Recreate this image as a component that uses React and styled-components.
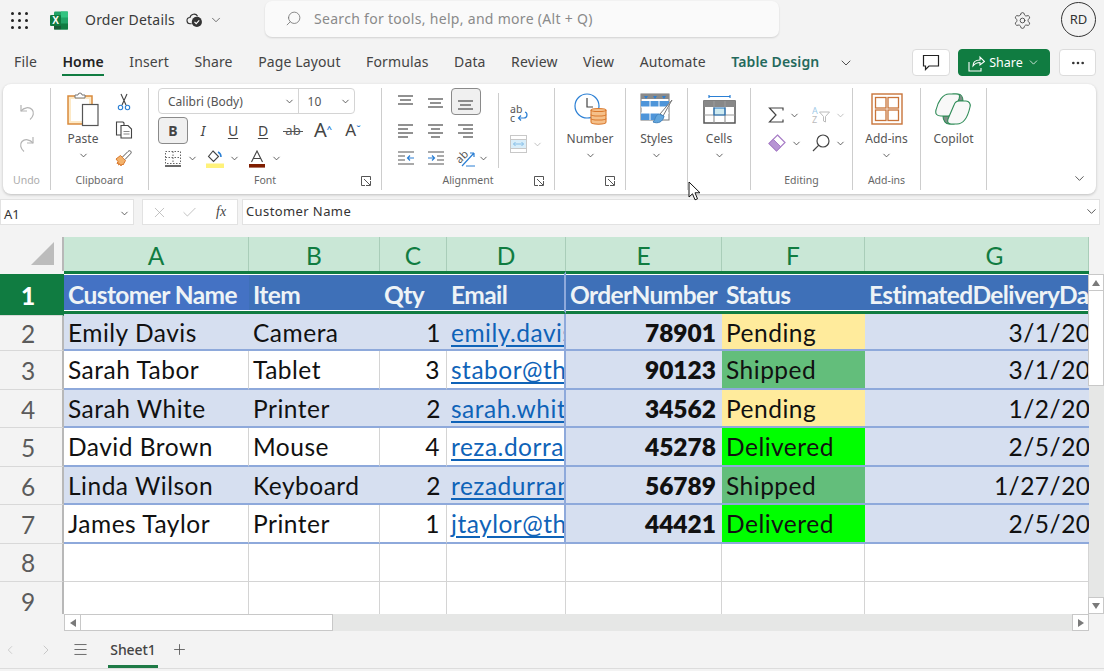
import React from "react";
import styled, { createGlobalStyle } from "styled-components";
import { ChevronDown, ChevronLeft, ChevronRight, Menu, Plus, Search, Settings, X, Check, MoreHorizontal } from "lucide-react";

const UI = `"Noto Sans", "Open Sans", sans-serif`;
const CELL = `Lato, "Liberation Sans", sans-serif`;

const GlobalStyle = createGlobalStyle`
  html, body { margin: 0; padding: 0; background: #f3f3f3; }
  * { box-sizing: border-box; }
`;

const Page = styled.div`
  position: relative;
  width: 1104px;
  height: 671px;
  overflow: hidden;
  background: #f3f3f3;
  font-family: ${UI};
  color: #333;
  display: flex;
  flex-direction: column;
`;

/* title bar */
const TitleBar = styled.div`
  height: 40px;
  display: flex;
  align-items: center;
  flex: none;
`;
const TitleLeft = styled.div`
  width: 265px;
  display: flex;
  align-items: center;
  padding-left: 11px;
`;
const Waffle = styled.div`
  display: grid;
  grid-template-columns: repeat(3, 3px);
  grid-auto-rows: 3px;
  gap: 4px;
  margin-right: 22px;
  i { background: #222; border-radius: 50%; }
`;
const DocName = styled.span`
  font-size: 14px;
  margin: 0 11px 0 17px;
  color: #3a3a3a;
  letter-spacing: 0.2px;
  margin-top: -2px;
`;
const SearchBox = styled.div`
  width: 514px;
  height: 36px;
  margin-top: -3px;
  background: #fafafa;
  border-radius: 7px;
  box-shadow: 0 1px 2px rgba(0, 0, 0, 0.14);
  display: flex;
  align-items: center;
  gap: 12px;
  padding-left: 20px;
  font-size: 14px;
  letter-spacing: 0.3px;
  color: #8a8a8a;
`;
const TitleRight = styled.div`
  flex: 1;
  display: flex;
  align-items: center;
  justify-content: flex-end;
  padding-right: 8px;
  gap: 29px;
`;
const Avatar = styled.div`
  width: 35px;
  height: 35px;
  border: 1px solid #333;
  border-radius: 50%;
  display: flex;
  align-items: center;
  justify-content: center;
  font-size: 13px;
  color: #333;
  margin-top: -2px;
`;

/* tabs */
const TabBar = styled.div`
  height: 44px;
  flex: none;
  display: flex;
  align-items: flex-start;
  padding: 12px 8px 0 14px;
`;
const Tabs = styled.div`
  display: flex;
  gap: 25.5px;
  flex: 1;
`;
const Tab = styled.div`
  position: relative;
  font-size: 14px;
  line-height: 20px;
  letter-spacing: 0.13px;
  color: ${(p) => (p.$accent ? "#24695c" : p.$active ? "#222" : "#444")};
  font-weight: ${(p) => (p.$active || p.$accent ? 600 : 400)};
  &::after {
    content: "";
    display: ${(p) => (p.$active ? "block" : "none")};
    position: absolute;
    left: 0;
    right: 0;
    bottom: -4px;
    height: 2px;
    background: #107c41;
  }
`;
const TabActions = styled.div`
  display: flex;
  gap: 8px;
  margin-top: -3px;
`;
const ActionBtn = styled.div`
  height: 27px;
  width: ${(p) => p.$w}px;
  margin-left: ${(p) => p.$ml || 0}px;
  border-radius: 4px;
  border: 1px solid ${(p) => (p.$green ? "#107c41" : "#dcdcdc")};
  background: ${(p) => (p.$green ? "#107c41" : "#fff")};
  color: ${(p) => (p.$green ? "#fff" : "#333")};
  display: flex;
  align-items: center;
  justify-content: center;
  gap: 4px;
  font-size: 12.5px;
`;

/* ribbon */
const Ribbon = styled.div`
  flex: none;
  width: 1093px;
  height: 110px;
  margin-left: 3px;
  background: #fff;
  border-radius: 8px;
  box-shadow: 0 1px 3px rgba(0, 0, 0, 0.22);
  display: flex;
  align-items: flex-start;
`;
const Group = styled.div`
  position: relative;
  width: ${(p) => p.$w}px;
  height: 102px;
  margin-top: 4px;
  border-right: 1px solid #cdcdcd;
  display: flex;
  flex-direction: column;
  flex: none;
`;
const Body = styled.div`
  height: 84px;
  display: flex;
  justify-content: ${(p) => p.$justify || "flex-start"};
  padding-left: ${(p) => p.$pl || 0}px;
`;
const GroupLabel = styled.div`
  text-align: center;
  font-size: 10.5px;
  line-height: 16px;
  color: ${(p) => (p.$off ? "#ababab" : "#666")};
`;
const Launcher = styled.div`
  position: absolute;
  right: 10px;
  bottom: 4px;
  line-height: 0;
`;
const Collapse = styled.div`
  flex: 1;
  height: 100%;
  display: flex;
  align-items: flex-end;
  justify-content: flex-end;
  padding: 0 9px 8px 0;
  color: #444;
  line-height: 0;
`;
const Tall = styled.div`
  display: flex;
  flex-direction: column;
  align-items: center;
  width: ${(p) => p.$w || 60}px;
  font-size: 12px;
  color: #555;
  line-height: 18px;
  svg.lucide { margin-top: 2px; }
`;
const TallIcon = styled.div`
  height: 42px;
  display: flex;
  align-items: center;
  justify-content: center;
`;
const Chev = styled(ChevronDown).attrs((p) => ({ size: p.size || 11, strokeWidth: 1.8 }))`
  color: ${(p) => (p.$off ? "#b5b5b5" : "#444")};
  flex: none;
`;
const StackCol = styled.div`
  display: flex;
  flex-direction: column;
  align-items: center;
  gap: ${(p) => p.$gap || 0}px;
  padding-top: ${(p) => p.$top || 0}px;
  margin-left: ${(p) => p.$ml || 0}px;
`;
const FontBox = styled.div`
  display: flex;
  width: 197px;
  height: 26px;
  border: 1px solid #d4d4d4;
  border-radius: 4px;
  font-size: 12px;
  color: #555;
`;
const FontField = styled.div`
  width: ${(p) => p.$w}px;
  display: flex;
  align-items: center;
  justify-content: space-between;
  padding: 0 3px 0 9px;
  & + & { border-left: 1px solid #d4d4d4; }
`;
const FontCol = styled.div`
  display: flex;
  flex-direction: column;
`;
const FontRow = styled.div`
  display: flex;
  align-items: center;
  height: ${(p) => p.$h}px;
  margin-top: ${(p) => p.$mt || 0}px;
  padding-left: ${(p) => p.$pl || 0}px;
  gap: ${(p) => p.$gap || 0}px;
`;
const FormatBtn = styled.div`
  width: 30px;
  height: 27px;
  display: flex;
  align-items: center;
  justify-content: center;
  border-radius: 4px;
  font-family: ${UI};
  font-size: 14px;
  color: #444;
  background: ${(p) => (p.$on ? "#f0f0f0" : "transparent")};
  border: 1px solid ${(p) => (p.$on ? "#8a8a8a" : "transparent")};
  font-weight: ${(p) => (p.$on ? 700 : 400)};
  font-style: ${(p) => (p.$i ? "italic" : "normal")};
  text-decoration: ${(p) => p.$deco || "none"};
  text-underline-offset: 2px;
`;
const FormatLetter = styled(FormatBtn)`
  font-size: ${(p) => p.$size || 13}px;
  padding-bottom: 2px;
`;
const Caret = styled.span`
  font-size: 9px;
  align-self: flex-start;
  margin-top: 4px;
  color: ${(p) => p.$c};
  font-weight: 700;
`;
const Drop = styled.div`
  display: flex;
  align-items: center;
  gap: ${(p) => p.$gap ?? 5}px;
`;
const OrientDrop = styled(Drop)`
  padding-left: 5px;
`;
const AlignGrid = styled.div`
  width: 107px;
  display: grid;
  grid-template-columns: 30px 30px 47px;
  grid-template-rows: 27px 29px 28px;
`;
const AlignCell = styled.div`
  width: 30px;
  display: flex;
  align-items: center;
  justify-content: center;
  border-radius: 4px;
  background: ${(p) => (p.$on ? "#f0f0f0" : "transparent")};
  border: 1px solid ${(p) => (p.$on ? "#8a8a8a" : "transparent")};
`;
const AlignSplit = styled.div`
  margin-top: 5px;
  height: 75px;
  border-left: 1px solid #cdcdcd;
  padding: 12px 0 0 11px;
  display: flex;
  flex-direction: column;
  gap: 12px;
`;
const EditGrid = styled.div`
  display: grid;
  grid-template-columns: auto auto;
  grid-auto-rows: 28px;
  column-gap: 10px;
  align-items: center;
  padding-top: 13px;
`;

/* formula bar */
const FormulaBar = styled.div`
  flex: none;
  height: 26px;
  margin-top: 5px;
  padding-right: 4px;
  display: flex;
  gap: 4px;
`;
const Field = styled.div`
  height: 26px;
  background: #fff;
  border: 1px solid #e2e2e2;
  display: flex;
  align-items: center;
  font-size: 13px;
  width: ${(p) => (p.$w ? `${p.$w}px` : "auto")};
  flex: ${(p) => (p.$w ? "none" : 1)};
  margin-left: ${(p) => p.$ml || 0}px;
  padding: ${(p) => p.$pt || 0}px ${(p) => p.$pr ?? 3}px ${(p) => p.$pb || 0}px 3px;
  justify-content: ${(p) => p.$justify || "flex-start"};
  color: #333;
  letter-spacing: ${(p) => p.$ls || 0};
`;
const FxGroup = styled(Field)`
  gap: 13px;
  padding: 0 9px 0 8px;
  color: #aaa;
`;
const Fx = styled.span`
  font-family: "Liberation Serif", serif;
  font-style: italic;
  font-size: 14px;
  color: #444;
  margin-left: 5px;
`;

/* sheet */
const SheetWrap = styled.div`
  flex: none;
  margin-top: 12px;
  display: flex;
  height: 377px;
`;
const Grid = styled.div`
  width: 1089px;
  display: grid;
  grid-template-columns: 64px 185px 131px 67px 119px 156px 143px 224px;
  grid-template-rows: 34px 43px 37px repeat(5, 38.5px) 38.5px 32.5px;
  overflow: hidden;
  font-family: ${CELL};
  font-size: 24.5px;
`;
const Corner = styled.div`
  background: #f3f3f3;
  border-right: 2px solid #b8b8b8;
  display: flex;
  align-items: flex-end;
  justify-content: flex-end;
  padding: 0 8px 6px 0;
  line-height: 0;
`;
const ColHead = styled.div`
  background: #c9e7d6;
  border-right: 1px solid #a9cdb9;
  color: #107c41;
  display: flex;
  align-items: center;
  justify-content: center;
  padding-top: 3px;
  padding-left: ${(p) => p.$shift || 0}px;
`;
const RowHead = styled.div`
  background: ${(p) => (p.$on ? "#107c41" : "#f3f3f3")};
  color: ${(p) => (p.$on ? "#fff" : "#5b5b5b")};
  font-weight: ${(p) => (p.$on ? 900 : 400)};
  border-right: 2px solid ${(p) => (p.$on ? "#107c41" : "#b8b8b8")};
  border-bottom: 1px solid #d8d8d8;
  display: flex;
  align-items: center;
  justify-content: center;
  padding: ${(p) => p.$top ?? 2}px 6px 0 0;
  margin: ${(p) => (p.$on ? "3px 0 -2px" : 0)};
  position: ${(p) => (p.$on ? "relative" : "static")};
`;
const HeadCell = styled.div`
  background: ${(p) => (p.$first ? "#4472c4" : "#3e70b8")};
  color: #eef3f6;
  font-weight: 700;
  letter-spacing: -0.58px;
  border-top: 3px solid #107c41;
  border-bottom: 3px solid #107c41;
  box-shadow: inset 0 1px 0 #fff, inset 0 -1px 0 #fff;
  display: flex;
  align-items: center;
  padding: 3px 0 0 4px;
  white-space: nowrap;
  overflow: hidden;
  border-right: ${(p) => (p.$split ? "2px solid #8ea9db" : "none")};
`;
const Cell = styled.div`
  background: ${(p) => p.$bg || "#fff"};
  color: #111;
  border-bottom: 2px solid #8ea9db;
  border-right: ${(p) =>
    p.$split ? "2px solid #8ea9db" : p.$rule ? "1px solid #d4d4d4" : "none"};
  display: flex;
  align-items: center;
  justify-content: ${(p) => (p.$right ? "flex-end" : "flex-start")};
  padding: 1px ${(p) => (p.$right ? 6 : 4)}px 0 4px;
  font-weight: ${(p) => (p.$bold ? 800 : 400)};
  letter-spacing: ${(p) => (p.$bold ? 0 : "0.5px")};
  white-space: nowrap;
  overflow: hidden;
`;
const Clipped = styled.span`
  margin-right: -37px;
`;
const Mail = styled.span`
  color: #0f63b8;
  text-decoration: underline;
  text-underline-offset: 3px;
`;
const Blank = styled.div`
  background: #fff;
  border-right: 1px solid #d4d4d4;
  border-bottom: 1px solid #d4d4d4;
`;

const VScroll = styled.div`
  width: 15px;
  display: flex;
  flex-direction: column;
  background: #e6e7e6;
`;
const VGap = styled.div`
  height: 37px;
  background: #f3f3f3;
`;
const ScrollBtn = styled.div`
  height: ${(p) => p.$h || 17}px;
  width: ${(p) => p.$w || 16}px;
  margin-left: ${(p) => p.$ml || 0}px;
  background: #fff;
  border: 1px solid #c8c8c8;
  display: flex;
  align-items: center;
  justify-content: center;
  line-height: 0;
  flex: none;
`;
const VThumb = styled.div`
  height: 95px;
  margin-left: -1px;
  background: #fff;
  border: 1px solid #c8c8c8;
  border-top: none;
  flex: none;
`;
const Fill = styled.div`
  flex: 1;
`;
const HScroll = styled.div`
  flex: none;
  width: 1025px;
  height: 17px;
  margin-left: 64px;
  background: #e6e7e6;
  display: flex;
`;
const HThumb = styled.div`
  width: 252px;
  background: #fff;
  border: 1px solid #c8c8c8;
  border-left: none;
`;

/* sheet tabs */
const SheetTabs = styled.div`
  flex: none;
  height: 38px;
  border-bottom: 1px solid #dcdcdc;
  display: flex;
  align-items: center;
  padding-left: 3px;
  color: #444;
`;
const NavBtn = styled.div`
  width: ${(p) => p.$w}px;
  margin-left: ${(p) => p.$ml || 0}px;
  display: flex;
  justify-content: center;
  color: ${(p) => p.$c || "#555"};
  line-height: 0;
`;
const SheetTab = styled.div`
  position: relative;
  width: 50px;
  margin: 0 8px 0 15px;
  text-align: center;
  font-size: 14px;
  font-weight: 500;
  letter-spacing: -0.1px;
  line-height: 37px;
  color: #444;
  &::after {
    content: "";
    position: absolute;
    left: 0;
    right: 0;
    bottom: 0;
    height: 3px;
    background: #1e7a46;
  }
`;
const Cursor = styled.svg`
  position: absolute;
  left: 688px;
  top: 181px;
`;

/* icons */
const ExcelLogo = () => (
  <svg width="18" height="19" viewBox="0 0 18 19">
    <rect x="4" y="0.5" width="14" height="18" rx="1.2" fill="#21a366" />
    <rect x="11" y="0.5" width="7" height="6" fill="#33c481" />
    <rect x="11" y="12.5" width="7" height="6" fill="#107c41" />
    <rect x="4" y="12.5" width="7" height="6" fill="#185c37" />
    <rect x="0" y="4" width="11" height="11" rx="1" fill="#0f7b40" />
    <text x="5.5" y="13" textAnchor="middle" fontSize="10" fontWeight="700" fill="#fff" fontFamily="Liberation Sans">X</text>
  </svg>
);
const CloudCheck = () => (
  <svg width="17" height="16" viewBox="0 0 18 16" fill="none" stroke="#333" strokeWidth="1.2">
    <path d="M6 12H4.5a3.3 3.3 0 0 1-.3-6.6A4.4 4.4 0 0 1 12.3 4" />
    <circle cx="11.5" cy="10" r="5.4" fill="#333" stroke="none" />
    <path d="M9 10l1.8 1.8L14 8.5" stroke="#fff" />
  </svg>
);
const Comment = () => (
  <svg width="18" height="17" viewBox="0 0 18 17" fill="none" stroke="#222" strokeWidth="1.2">
    <path d="M1.5 1.5h15v10.5H7l-3.5 3.5V12h-2z" />
  </svg>
);
const ShareIcon = () => (
  <svg width="17" height="18" viewBox="0 0 17 18" fill="none" stroke="#fff" strokeWidth="1.1">
    <path d="M1 8v9h12v-3" />
    <path d="M5 12c0-4 3-6 7-6V3l4.5 4.5L12 11V8.500c-3 0-5 1-7 3.500z" />
  </svg>
);
const Undo = ({ flip }) => (
  <svg width="18" height="18" viewBox="0 0 18 18" fill="none" stroke="#b4b4b4" strokeWidth="1.2" style={flip ? { transform: "scaleX(-1)" } : undefined}>
    <path d="M3 2v6h6" />
    <path d="M3 8c3-3.500 8-4.500 11-1.500 2.500 2.500 1.500 7-2 10" />
  </svg>
);
const PasteIcon = () => (
  <svg width="32" height="36" viewBox="0 0 32 36">
    <rect x="1" y="5" width="24" height="28" fill="#fde9c6" stroke="#d98a3d" strokeWidth="1.5" />
    <rect x="4" y="8" width="18" height="22" fill="#fff" />
    <path d="M8 7V4h3a2 2 0 0 1 4 0h3v3z" fill="#fff" stroke="#777" strokeWidth="1" />
    <rect x="15.500" y="13.500" width="15.500" height="21" fill="#fff" stroke="#555" strokeWidth="1.2" />
  </svg>
);
const Scissors = () => (
  <svg width="14" height="18" viewBox="0 0 14 18" fill="none" strokeWidth="1.1">
    <path d="M4 1l5 11M10 1L5 12" stroke="#444" />
    <circle cx="3.500" cy="14.500" r="2.200" stroke="#2a7fd4" />
    <circle cx="10.500" cy="14.500" r="2.200" stroke="#2a7fd4" />
  </svg>
);
const CopyIcon = () => (
  <svg width="18" height="18" viewBox="0 0 18 18" fill="none" stroke="#444" strokeWidth="1.1">
    <path d="M6 14H1.500V1H8l1 1v2" />
    <path d="M6 4.500h7l3.500 3.500v9H6z" fill="#fff" />
    <path d="M8.500 10.500h6M8.500 13h6" stroke="#888" />
  </svg>
);
const Painter = () => (
  <svg width="18" height="18" viewBox="0 0 18 18" fill="none">
    <path d="M1 10l4.500-3.500 5 5L8 16l-1-1-1 2-1-2-1.500 1 .5-2-2 .5 1-2z" fill="#f3b26b" stroke="#d9782d" />
    <path d="M7.500 8L13 2.500c1-1 2-1 2.700-.3s.7 1.700-.3 2.700L10 10.500" fill="#fff" stroke="#555" />
  </svg>
);
const BorderIcon = () => (
  <svg width="18" height="18" viewBox="0 0 18 18" fill="none" stroke="#666" strokeWidth="1">
    <path d="M1.500 1.500h15v12h-15z" strokeDasharray="1.500 1.500" />
    <path d="M9 1.500v12M1.500 7.500h15" strokeDasharray="1.500 1.500" />
    <path d="M1 16h16" strokeWidth="1.600" stroke="#444" />
  </svg>
);
const FillIcon = () => (
  <svg width="18" height="18" viewBox="0 0 18 18" fill="none">
    <path d="M7 1l5.500 5.500L7.500 11.500 2.500 6.500z" stroke="#444" strokeWidth="1.100" fill="#fff" />
    <path d="M12 2c2 1 3 3 3 5" stroke="#2a7fd4" strokeWidth="1.500" />
    <rect x="0" y="13.500" width="18" height="4.500" fill="#fff27a" />
  </svg>
);
const ColorA = () => (
  <svg width="18" height="18" viewBox="0 0 18 18" fill="none" stroke="#444" strokeWidth="1.100">
    <path d="M3.500 12L9 1l5.500 11M5.500 8.500h7" />
    <rect x="1" y="14" width="16" height="3.600" fill="#7f1d00" stroke="none" />
  </svg>
);
const StrikeAb = () => (
  <svg width="20" height="14" viewBox="0 0 20 14" fill="none" stroke="#555" strokeWidth="1">
    <path d="M0 7.500h20" />
    <text x="10" y="11" textAnchor="middle" fontSize="13" fill="#555" stroke="none" fontFamily="Noto Sans">ab</text>
  </svg>
);
const LauncherIcon = () => (
  <svg width="10" height="10" viewBox="0 0 10 10" fill="none" stroke="#555" strokeWidth="1">
    <path d="M9.500 4V.5H.5v9H4" />
    <path d="M3 3l6 6M9.500 5v4.500H5" />
  </svg>
);
const AlignLines = ({ lines }) => (
  <svg width="18" height="20" viewBox="0 0 18 20" fill="none" stroke="#555" strokeWidth="1.300">
    {lines.map(([a, b, y]) => (
      <path key={y} d={`M${a} ${y}H${b}`} />
    ))}
  </svg>
);
const IndentIcon = ({ flip }) => (
  <svg width="18" height="14" viewBox="0 0 18 14" fill="none" strokeWidth="1.200" style={flip ? { transform: "scaleX(-1)" } : undefined}>
    <path d="M1 1h16M1 13h16M10 5h7M10 9h7" stroke="#555" />
    <path d="M1 7h6M5 4.500L7.500 7 5 9.500" stroke="#2a7fd4" />
  </svg>
);
const OrientIcon = () => (
  <svg width="20" height="20" viewBox="0 0 20 20" fill="none">
    <text x="7" y="12" fontSize="11" fill="#555" transform="rotate(-45 7 10)" textAnchor="middle" fontFamily="Noto Sans">ab</text>
    <path d="M6 18L18 5M18 5h-4M18 5v4" stroke="#2a7fd4" strokeWidth="1.200" />
    <path d="M10 18h9" stroke="#2a7fd4" strokeWidth="1" />
  </svg>
);
const WrapIcon = () => (
  <svg width="18" height="18" viewBox="0 0 18 18" fill="none">
    <text x="0" y="8" fontSize="10.500" fill="#555" fontFamily="Noto Sans">ab</text>
    <text x="0" y="17" fontSize="10.500" fill="#555" fontFamily="Noto Sans">c</text>
    <path d="M15 7c3 1 2.500 6-1 6H8.500M11 10.500L8.500 13l2.500 2.500" stroke="#2a7fd4" strokeWidth="1.200" />
  </svg>
);
const MergeIcon = () => (
  <svg width="17" height="18" viewBox="0 0 17 18" fill="none" strokeWidth="1">
    <rect x="0.500" y="0.500" width="16" height="17" fill="#fff" stroke="#c8c8c8" />
    <rect x="0.500" y="4.500" width="16" height="9" fill="#d8edf9" stroke="#c8c8c8" />
    <path d="M3.500 9h10M5.500 7L3.500 9l2 2M11.500 7l2 2-2 2" stroke="#86bfe8" />
  </svg>
);
const NumberIcon = () => (
  <svg width="33" height="33" viewBox="0 0 33 33" fill="none">
    <circle cx="13" cy="13" r="12" stroke="#2a7fd4" strokeWidth="1.200" fill="#fff" />
    <path d="M13 5v9h6" stroke="#444" strokeWidth="1.200" />
    <path d="M17 17c0-2 15-2 15 0v12c0 3-15 3-15 0z" fill="#f5c08a" stroke="#d9782d" strokeWidth="1.100" />
    <path d="M17 17c0 2 15 2 15 0M17 21.500c0 2 15 2 15 0M17 25.500c0 2 15 2 15 0" stroke="#d9782d" strokeWidth="1.100" />
  </svg>
);
const StylesIcon = () => (
  <svg width="34" height="32" viewBox="0 0 34 32" fill="none">
    <rect x="1" y="1" width="28" height="26" fill="#fff" stroke="#777" />
    <rect x="1" y="1" width="28" height="5" fill="#8a8a8a" />
    <path d="M4 3h4l-2 3zM13 3h4l-2 3zM22 3h4l-2 3z" fill="#2a7fd4" />
    <rect x="1" y="8" width="28" height="6" fill="#4e95d9" />
    <rect x="1" y="20" width="18" height="7" fill="#4e95d9" />
    <path d="M1 14h28M1 20h28M10 6v21M19 6v21" stroke="#fff" />
    <path d="M32 7L20 21l3 2z" fill="#fff" stroke="#777" />
    <path d="M19 21c-4 1-3 5-6 8 5 2 10 0 11-6z" fill="#62a6dd" stroke="#4283bd" />
  </svg>
);
const CellsIcon = () => (
  <svg width="33" height="29" viewBox="0 0 33 29" fill="none" strokeWidth="1.200">
    <path d="M6 1.500h21M6 0v3M27 0v3" stroke="#2a7fd4" />
    <rect x="1" y="6" width="31" height="22" stroke="#555" strokeWidth="1.500" />
    <rect x="1" y="6" width="31" height="6" fill="#888" />
    <rect x="11" y="13" width="11" height="7" fill="#cfeaf0" />
    <path d="M1 20h31M11 6v22M22 6v22" stroke="#999" />
    <path d="M11 13h11v7H11z" stroke="#1e6fb8" />
  </svg>
);
const Sigma = () => (
  <svg width="16" height="16" viewBox="0 0 16 16" fill="none" stroke="#444" strokeWidth="1.200">
    <path d="M15 3.500V1H1.500l6.500 7-6.500 7H15v-2.500" />
  </svg>
);
const SortFilter = () => (
  <svg width="18" height="18" viewBox="0 0 18 18" fill="none" strokeWidth="1">
    <text x="0" y="8" fontSize="9" fill="#9fcbe8" fontFamily="Noto Sans">A</text>
    <text x="0" y="17" fontSize="9" fill="#bbb" fontFamily="Noto Sans">Z</text>
    <path d="M7.500 6h10l-4 4.500V16l-2-1v-4.500z" stroke="#bbb" />
  </svg>
);
const Eraser = () => (
  <svg width="18" height="18" viewBox="0 0 18 18" fill="none">
    <path d="M9.500 1L17 8.500 8.500 17 1 9.500z" fill="#fff" stroke="#a77cc6" strokeWidth="1.200" />
    <path d="M5.300 5.300L12.800 12.800 8.500 17 1 9.500z" fill="#b794d4" stroke="#a77cc6" />
  </svg>
);
const FindIcon = () => (
  <svg width="18" height="18" viewBox="0 0 18 18" fill="none" stroke="#444" strokeWidth="1.200">
    <circle cx="11" cy="7" r="6" />
    <path d="M6.800 11.200L1 17" />
  </svg>
);
const AddIns = () => (
  <svg width="32" height="32" viewBox="0 0 32 32" fill="none" stroke="#c8743a" strokeWidth="1.300">
    <rect x="1" y="1" width="30" height="30" strokeWidth="1.400" />
    <rect x="4.500" y="4.500" width="10.500" height="10.500" />
    <rect x="17" y="4.500" width="10.500" height="10.500" />
    <rect x="4.500" y="17" width="10.500" height="10.500" />
    <rect x="17" y="17" width="10.500" height="10.500" />
  </svg>
);
const Copilot = () => (
  <svg width="37" height="32" viewBox="0 0 37 32" fill="none" stroke="#2e8b57" strokeWidth="1.100">
    <path d="M18 1h5c3 0 5 3 5 7H17z" fill="#7f8f87" />
    <path d="M8 23h11v8h-5c-3 0-6-3-6-8z" fill="#7f8f87" />
    <path d="M14 1h7c4 0 4 2 3 5l-6 14c-1 2-2 3-5 3H6C2 23 0 21 1 17 3 8 8 1 14 1z" fill="#f8f8f8" />
    <path d="M22 31h-6c-3 0-4-2-3-5l6-14c1-3 3-4 5-4h7c3 0 5 3 4 6-2 9-6 17-13 17z" fill="#f8f8f8" />
  </svg>
);
const Tri = ({ dir }) => {
  const pts = {
    up: "1,8 5,2 9,8",
    down: "1,2 5,8 9,2",
    left: "8,1 2,5 8,9",
    right: "2,1 8,5 2,9",
  }[dir];
  return (
    <svg width="10" height="10" viewBox="0 0 10 10">
      <polygon points={pts} fill="#7a7a7a" />
    </svg>
  );
};

const columns = ["A", "B", "C", "D", "E", "F", "G"];
const headers = ["Customer Name", "Item", "Qty", "Email", "OrderNumber", "Status", "EstimatedDeliveryDate"];
const statusBg = { Pending: "#ffeb9c", Shipped: "#63be7b", Delivered: "#00ff00" };
const orders = [
  ["Emily Davis", "Camera", 1, "emily.davis@thecontoso.com", 78901, "Pending", "3/1/2025"],
  ["Sarah Tabor", "Tablet", 3, "stabor@thecontoso.com", 90123, "Shipped", "3/1/2025"],
  ["Sarah White", "Printer", 2, "sarah.white@contoso.com", 34562, "Pending", "1/2/2025"],
  ["David Brown", "Mouse", 4, "reza.dorrani@contoso.com", 45278, "Delivered", "2/5/2025"],
  ["Linda Wilson", "Keyboard", 2, "rezadurrani@contoso.com", 56789, "Shipped", "1/27/2025"],
  ["James Taylor", "Printer", 1, "jtaylor@thecontoso.com", 44421, "Delivered", "2/5/2025"],
];
const tabs = ["File", "Home", "Insert", "Share", "Page Layout", "Formulas", "Data", "Review", "View", "Automate"];
const band = "#d6dff0";

const App = () => {
  return (
    <Page>
      <GlobalStyle />
      <TitleBar>
        <TitleLeft>
          <Waffle>
            {Array.from({ length: 9 }).map((_, i) => (
              <i key={i} />
            ))}
          </Waffle>
          <ExcelLogo />
          <DocName>Order Details</DocName>
          <CloudCheck />
          <ChevronDown size={14} strokeWidth={1.4} color="#555" style={{ marginLeft: 6 }} />
        </TitleLeft>
        <SearchBox>
          <Search size={17} strokeWidth={1.2} color="#777" style={{ transform: "scaleX(-1)" }} />
          Search for tools, help, and more (Alt + Q)
        </SearchBox>
        <TitleRight>
          <Settings size={19} strokeWidth={1.1} color="#444" />
          <Avatar>RD</Avatar>
        </TitleRight>
      </TitleBar>

      <TabBar>
        <Tabs>
          {tabs.map((t) => (
            <Tab key={t} $active={t === "Home"}>
              {t}
            </Tab>
          ))}
          <Tab $accent>Table Design</Tab>
          <ChevronDown size={16} strokeWidth={1.4} color="#444" style={{ marginTop: 3, marginLeft: -7 }} />
        </Tabs>
        <TabActions>
          <ActionBtn $w={38}>
            <Comment />
          </ActionBtn>
          <ActionBtn $w={92} $green>
            <ShareIcon />
            Share
            <ChevronDown size={13} strokeWidth={1.4} />
          </ActionBtn>
          <ActionBtn $w={37} $ml={1}>
            <MoreHorizontal size={16} />
          </ActionBtn>
        </TabActions>
      </TabBar>

      <Ribbon>
        <Group $w={48}>
          <Body $justify="center">
            <StackCol $top={15} $gap={14}>
              <Undo />
              <Undo flip />
            </StackCol>
          </Body>
          <GroupLabel $off>Undo</GroupLabel>
        </Group>
        <Group $w={98}>
          <Body $pl={2}>
            <Tall $w={60}>
              <TallIcon>
                <PasteIcon />
              </TallIcon>
              Paste
              <Chev />
            </Tall>
            <StackCol $top={5} $gap={10} $ml={2}>
              <Scissors />
              <CopyIcon />
              <Painter />
            </StackCol>
          </Body>
          <GroupLabel>Clipboard</GroupLabel>
        </Group>
        <Group $w={233}>
          <Body $pl={9}>
            <FontCol>
              <FontBox>
                <FontField $w={140}>
                  Calibri (Body)
                  <Chev />
                </FontField>
                <FontField $w={57}>
                  10
                  <Chev />
                </FontField>
              </FontBox>
              <FontRow $h={27} $mt={3}>
                <FormatBtn $on>B</FormatBtn>
                <FormatBtn $i>I</FormatBtn>
                <FormatBtn $deco="underline">U</FormatBtn>
                <FormatBtn $deco="underline">D</FormatBtn>
                <FormatBtn>
                  <StrikeAb />
                </FormatBtn>
                <FormatLetter $size={20}>
                  A<Caret $c="#2a7fd4">^</Caret>
                </FormatLetter>
                <FormatLetter $size={17}>
                  A<Caret $c="#2a7fd4">ˇ</Caret>
                </FormatLetter>
              </FontRow>
              <FontRow $h={27} $mt={1} $pl={6} $gap={8}>
                <Drop>
                  <BorderIcon />
                  <Chev />
                </Drop>
                <Drop>
                  <FillIcon />
                  <Chev />
                </Drop>
                <Drop>
                  <ColorA />
                  <Chev />
                </Drop>
              </FontRow>
            </FontCol>
          </Body>
          <GroupLabel>Font</GroupLabel>
          <Launcher>
            <LauncherIcon />
          </Launcher>
        </Group>
        <Group $w={173}>
          <Body $pl={9}>
            <AlignGrid>
              <AlignCell><AlignLines lines={[[1, 16, 4], [3, 14, 8], [1, 16, 12]]} /></AlignCell>
              <AlignCell><AlignLines lines={[[1, 16, 7], [3, 14, 11], [1, 16, 15]]} /></AlignCell>
              <AlignCell $on><AlignLines lines={[[1, 16, 9], [3, 14, 13], [1, 16, 17]]} /></AlignCell>
              <AlignCell><AlignLines lines={[[1, 16, 5], [1, 11, 9], [1, 16, 13], [1, 11, 17]]} /></AlignCell>
              <AlignCell><AlignLines lines={[[1, 16, 5], [4, 13, 9], [1, 16, 13], [4, 13, 17]]} /></AlignCell>
              <AlignCell><AlignLines lines={[[1, 16, 5], [6, 16, 9], [1, 16, 13], [6, 16, 17]]} /></AlignCell>
              <AlignCell><IndentIcon flip /></AlignCell>
              <AlignCell><IndentIcon /></AlignCell>
              <OrientDrop $gap={2}>
                <OrientIcon />
                <Chev />
              </OrientDrop>
            </AlignGrid>
            <AlignSplit>
              <WrapIcon />
              <Drop $gap={5}>
                <MergeIcon />
                <Chev $off />
              </Drop>
            </AlignSplit>
          </Body>
          <GroupLabel>Alignment</GroupLabel>
          <Launcher>
            <LauncherIcon />
          </Launcher>
        </Group>
        <Group $w={71}>
          <Body $justify="center">
            <Tall>
              <TallIcon>
                <NumberIcon />
              </TallIcon>
              Number
              <Chev />
            </Tall>
          </Body>
          <Launcher>
            <LauncherIcon />
          </Launcher>
        </Group>
        <Group $w={62}>
          <Body $justify="center">
            <Tall>
              <TallIcon>
                <StylesIcon />
              </TallIcon>
              Styles
              <Chev />
            </Tall>
          </Body>
        </Group>
        <Group $w={63}>
          <Body $justify="center">
            <Tall>
              <TallIcon>
                <CellsIcon />
              </TallIcon>
              Cells
              <Chev />
            </Tall>
          </Body>
        </Group>
        <Group $w={102}>
          <Body $pl={17}>
            <EditGrid>
              <Drop>
                <Sigma />
                <Chev />
              </Drop>
              <Drop>
                <SortFilter />
                <Chev $off />
              </Drop>
              <Drop>
                <Eraser />
                <Chev />
              </Drop>
              <Drop>
                <FindIcon />
                <Chev />
              </Drop>
            </EditGrid>
          </Body>
          <GroupLabel>Editing</GroupLabel>
        </Group>
        <Group $w={68}>
          <Body $justify="center">
            <Tall>
              <TallIcon>
                <AddIns />
              </TallIcon>
              Add-ins
              <Chev />
            </Tall>
          </Body>
          <GroupLabel>Add-ins</GroupLabel>
        </Group>
        <Group $w={66}>
          <Body $justify="center">
            <Tall>
              <TallIcon>
                <Copilot />
              </TallIcon>
              Copilot
            </Tall>
          </Body>
        </Group>
        <Collapse>
          <ChevronDown size={15} strokeWidth={1.4} />
        </Collapse>
      </Ribbon>

      <FormulaBar>
        <Field $w={134} $justify="space-between" $pt={3}>
          A1
          <Chev />
        </Field>
        <FxGroup $w={96} $ml={4}>
          <X size={17} strokeWidth={1} />
          <Check size={17} strokeWidth={1} />
          <Fx>fx</Fx>
        </FxGroup>
        <Field $justify="space-between" $ls="0.4px" $pr={0} $pb={2}>
          Customer Name
          <ChevronDown size={15} strokeWidth={1.4} color="#444" />
        </Field>
      </FormulaBar>

      <SheetWrap>
        <Grid>
          <Corner>
            <svg width="23" height="23" viewBox="0 0 23 23">
              <polygon points="23,0 23,23 0,23" fill="#bcbcbc" />
            </svg>
          </Corner>
          {columns.map((c) => (
            <ColHead key={c} $shift={c === "G" ? 36 : 0}>{c}</ColHead>
          ))}

          <RowHead $on>1</RowHead>
          {headers.map((h, i) => (
            <HeadCell key={h} $first={i === 0} $split={i === 3}>
              {h}
            </HeadCell>
          ))}

          {orders.map((row, r) => {
            const banded = r % 2 === 0;
            const plain = banded ? band : "#fff";
            return (
              <React.Fragment key={row[0]}>
                <RowHead>{r + 2}</RowHead>
                <Cell $bg={plain} $rule={!banded}>{row[0]}</Cell>
                <Cell $bg={plain} $rule={!banded}>{row[1]}</Cell>
                <Cell $bg={plain} $rule={!banded} $right>{row[2]}</Cell>
                <Cell $bg={plain} $split><Mail>{row[3]}</Mail></Cell>
                <Cell $bg={band} $right $bold>{row[4]}</Cell>
                <Cell $bg={statusBg[row[5]]}>{row[5]}</Cell>
                <Cell $bg={band} $right><Clipped>{row[6]}</Clipped></Cell>
              </React.Fragment>
            );
          })}

          {[8, 9].map((n) => (
            <React.Fragment key={n}>
              <RowHead $top={n === 9 ? 7 : 0}>{n}</RowHead>
              {columns.map((c) => (
                <Blank key={c} />
              ))}
            </React.Fragment>
          ))}
        </Grid>
        <VScroll>
          <VGap />
          <ScrollBtn $ml={-1}>
            <Tri dir="up" />
          </ScrollBtn>
          <VThumb />
          <Fill />
          <ScrollBtn $ml={-1}>
            <Tri dir="down" />
          </ScrollBtn>
        </VScroll>
      </SheetWrap>

      <HScroll>
        <ScrollBtn $w={17}>
          <Tri dir="left" />
        </ScrollBtn>
        <HThumb />
        <Fill />
        <ScrollBtn $w={17}>
          <Tri dir="right" />
        </ScrollBtn>
      </HScroll>

      <SheetTabs>
        <NavBtn $w={14} $c="#bdbdbd"><ChevronLeft size={16} strokeWidth={1.2} /></NavBtn>
        <NavBtn $w={44} $ml={7} $c="#bdbdbd"><ChevronRight size={16} strokeWidth={1.2} /></NavBtn>
        <NavBtn $w={25}><Menu size={17} strokeWidth={1.2} /></NavBtn>
        <SheetTab>Sheet1</SheetTab>
        <NavBtn $w={26}><Plus size={17} strokeWidth={1.2} /></NavBtn>
      </SheetTabs>

      <Cursor width="13" height="20" viewBox="0 0 13 20">
        <path d="M1 1v15l3.500-3.200 2.500 6 2.500-1-2.500-6H12z" fill="#fff" stroke="#111" strokeWidth="1" />
      </Cursor>
    </Page>
  );
};

export default App;
